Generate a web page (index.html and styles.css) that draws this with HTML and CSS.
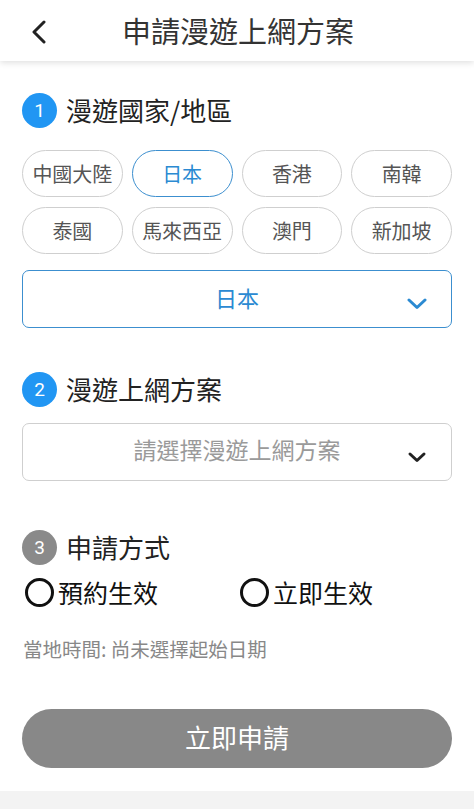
FILE: index.html
```html
<!DOCTYPE html>
<html lang="zh-Hant">
<head>
<meta charset="utf-8">
<title>申請漫遊上網方案</title>
<link rel="stylesheet" href="styles.css">
</head>
<body>
<div class="page">
  <header class="topbar">
    <span class="back">
      <svg width="20" height="24" viewBox="0 0 20 24"><path d="M15 2 L5 12 L15 22" fill="none" stroke="#222" stroke-width="3" stroke-linecap="round" stroke-linejoin="round"/></svg>
    </span>
    <h1 class="title">申請漫遊上網方案</h1>
  </header>

  <main class="content">
    <section class="sec sec1">
      <div class="sec-head"><span class="num num-blue">1</span><span class="sec-title">漫遊國家/地區</span></div>
      <div class="pills">
        <span class="pill">中國大陸</span>
        <span class="pill pill-on">日本</span>
        <span class="pill">香港</span>
        <span class="pill">南韓</span>
        <span class="pill">泰國</span>
        <span class="pill">馬來西亞</span>
        <span class="pill">澳門</span>
        <span class="pill">新加坡</span>
      </div>
      <div class="select select-on">
        <span class="select-text">日本</span>
        <svg class="chev" width="20" height="12" viewBox="0 0 20 12"><path d="M2 2 L10 9.5 L18 2" fill="none" stroke="#2b8ad2" stroke-width="3" stroke-linecap="round" stroke-linejoin="round"/></svg>
      </div>
    </section>

    <section class="sec sec2">
      <div class="sec-head"><span class="num num-blue">2</span><span class="sec-title">漫遊上網方案</span></div>
      <div class="select">
        <span class="select-text placeholder">請選擇漫遊上網方案</span>
        <svg class="chev" width="20" height="12" viewBox="0 0 20 12"><path d="M3 3 L10 9.5 L17 3" fill="none" stroke="#222" stroke-width="3" stroke-linecap="round" stroke-linejoin="round"/></svg>
      </div>
    </section>

    <section class="sec sec3">
      <div class="sec-head"><span class="num num-gray">3</span><span class="sec-title">申請方式</span></div>
      <div class="radios">
        <label class="radio"><span class="ring"></span><span>預約生效</span></label>
        <label class="radio"><span class="ring"></span><span>立即生效</span></label>
      </div>
      <p class="local">當地時間: 尚未選擇起始日期</p>
    </section>

    <button class="submit">立即申請</button>
  </main>
  <div class="footer-band"></div>
</div>
</body>
</html>
```

FILE: styles.css
```css
* { box-sizing: border-box; }
html, body { margin: 0; padding: 0; background: #fff; }
body {
  font-family: "Noto Sans CJK TC", "Noto Sans", sans-serif;
  color: #333;
  width: 474px;
  height: 809px;
  overflow: hidden;
}
.page { display: flex; flex-direction: column; height: 809px; }

.topbar {
  height: 61px;
  display: flex;
  align-items: center;
  justify-content: center;
  position: relative;
  background: #fff;
  box-shadow: 0 2px 6px rgba(0, 0, 0, 0.12);
  flex: none;
}
.back {
  position: absolute;
  left: 29px;
  top: 20px;
  display: flex;
}
.title {
  margin: 0;
  font-size: 29px;
  font-weight: 400;
  color: #333;
  line-height: 1;
  padding-left: 2px;
}

.content {
  flex: 1;
  padding: 31px 22px 0;
  display: flex;
  flex-direction: column;
}

.sec-head {
  display: flex;
  align-items: center;
  gap: 9px;
  height: 36px;
}
.num {
  width: 35px;
  height: 35px;
  border-radius: 50%;
  color: #fff;
  font-family: Roboto, "Noto Sans", sans-serif;
  font-size: 19px;
  display: flex;
  align-items: center;
  justify-content: center;
  flex: none;
}
.num-blue { background: #2196f3; }
.num-gray { background: #8a8a8a; }
.sec-title {
  font-size: 26px;
  color: #222;
  line-height: 1;
}

.pills {
  margin-top: 22px;
  display: grid;
  grid-template-columns: repeat(4, 1fr);
  gap: 10px 9px;
}
.pill {
  height: 47px;
  border: 1.5px solid #cfcfcf;
  border-radius: 24px;
  display: flex;
  align-items: center;
  justify-content: center;
  font-size: 20px;
  color: #555;
  white-space: nowrap;
}
.pill-on {
  border-color: #3c8fcf;
  color: #2b8ad2;
}

.select {
  margin-top: 16px;
  height: 58px;
  border: 1.5px solid #cfcfcf;
  border-radius: 7px;
  display: flex;
  align-items: center;
  justify-content: center;
  position: relative;
}
.select-on { border-color: #3c8fcf; }
.select-text {
  font-size: 22px;
  color: #2b8ad2;
  line-height: 1;
}
.select-on .select-text { margin-top: -4px; }
.placeholder { color: #9a9a9a; margin-top: -6px; font-size: 23px; }
.chev {
  position: absolute;
  right: 24px;
  top: 27px;
}

.sec2 { margin-top: 43px; }
.sec3 { margin-top: 48px; }

.radios {
  margin-top: 13px;
  display: grid;
  grid-template-columns: 1fr 1fr;
}
.radio {
  display: flex;
  align-items: center;
  gap: 4px;
  padding-left: 3px;
  font-size: 25px;
  color: #111;
  line-height: 1;
}
.ring {
  width: 29px;
  height: 29px;
  border: 3px solid #111;
  border-radius: 50%;
  flex: none;
}
.local {
  margin: 32px 0 0;
  padding-left: 1px;
  font-size: 19.5px;
  color: #888;
  line-height: 1;
}

.submit {
  margin-top: 50px;
  height: 59px;
  width: 100%;
  border: none;
  border-radius: 30px;
  background: #888;
  color: #fff;
  font-family: "Noto Sans CJK TC", "Noto Sans", sans-serif;
  font-size: 26px;
  display: flex;
  align-items: center;
  justify-content: center;
  padding: 0 0 4px;
}

.footer-band {
  height: 18px;
  background: #f3f3f3;
  flex: none;
}
```
